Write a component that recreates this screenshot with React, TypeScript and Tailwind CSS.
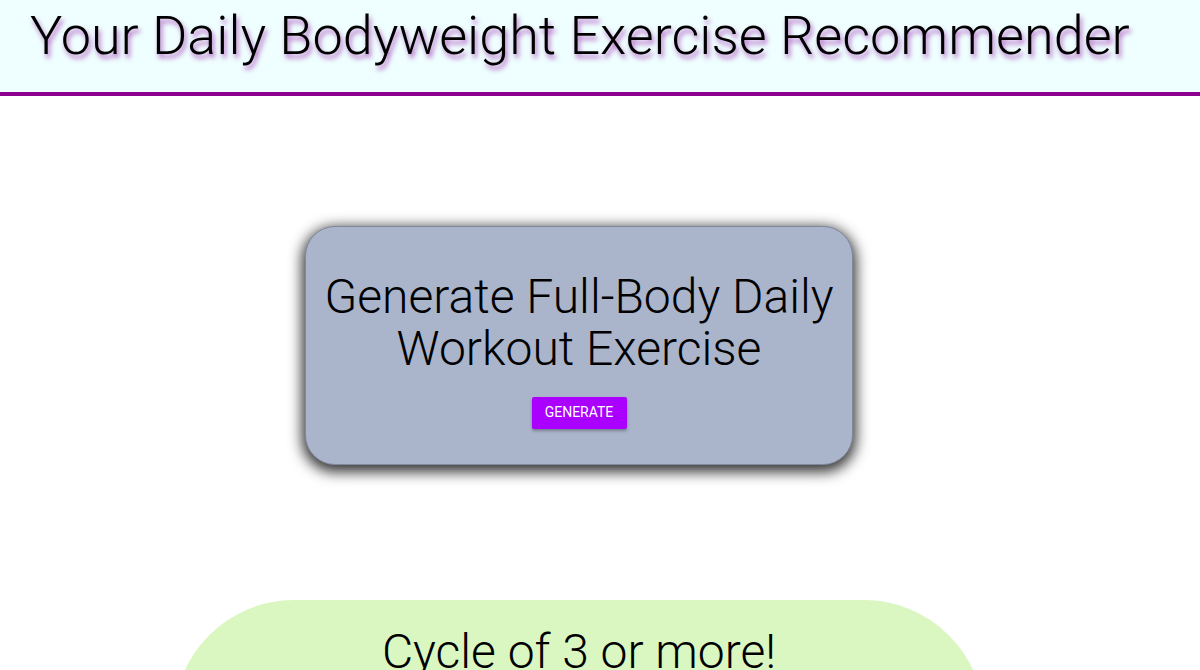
import React from "react";

const App = () => {
  return (
    <div className="min-h-screen bg-white font-['Roboto',sans-serif] font-light text-black overflow-hidden">
      <header className="h-[96px] bg-[#effefe] border-b-4 border-[#8e008e] pl-[30px]">
        <h1 className="text-[54px] leading-[72px] font-light [text-shadow:2px_4px_5px_rgba(140,0,160,0.6)]">
          Your Daily Bodyweight Exercise Recommender
        </h1>
      </header>

      <main className="flex flex-col items-center pr-[42px]">
        <section className="mt-[130px] w-[548px] h-[239px] rounded-[30px] bg-[#aab4cb] shadow-[0_4px_14px_3px_rgba(0,0,0,0.8)] border border-[#7f889c] flex flex-col items-center justify-center">
          <h2 className="text-[48px] leading-[52px] font-light text-center mt-2">
            Generate Full-Body Daily
            <br />
            Workout Exercise
          </h2>
          <button
            type="button"
            className="mt-[22px] w-[95px] h-[32px] bg-[#aa00ff] text-white text-[14px] font-normal uppercase rounded-[2px] shadow-[0_2px_3px_rgba(0,0,0,0.3)]"
          >
            Generate
          </button>
        </section>

        <section className="mt-[135px] w-[810px] h-[300px] rounded-t-[120px] bg-[#daf7c2] flex justify-center">
          <h2 className="mt-[22px] text-[48px] leading-[60px] font-light">Cycle of 3 or more!</h2>
        </section>
      </main>
    </div>
  );
};

export default App;
